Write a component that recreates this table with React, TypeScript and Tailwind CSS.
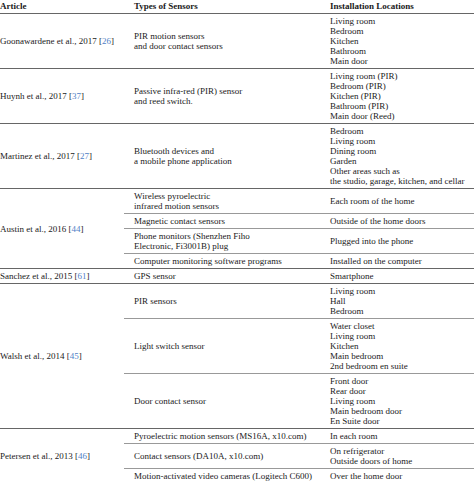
import React from "react";

type Row = { types: string[]; locs: string[] };
type Group = { article: string; ref: string; rows: Row[] };

const groups: Group[] = [
  {
    article: "Goonawardene et al., 2017",
    ref: "26",
    rows: [
      {
        types: ["PIR motion sensors", "and door contact sensors"],
        locs: ["Living room", "Bedroom", "Kitchen", "Bathroom", "Main door"],
      },
    ],
  },
  {
    article: "Huynh et al., 2017",
    ref: "37",
    rows: [
      {
        types: ["Passive infra-red (PIR) sensor", "and reed switch."],
        locs: [
          "Living room (PIR)",
          "Bedroom (PIR)",
          "Kitchen (PIR)",
          "Bathroom (PIR)",
          "Main door (Reed)",
        ],
      },
    ],
  },
  {
    article: "Martinez et al., 2017",
    ref: "27",
    rows: [
      {
        types: ["Bluetooth devices and", "a mobile phone application"],
        locs: [
          "Bedroom",
          "Living room",
          "Dining room",
          "Garden",
          "Other areas such as",
          "the studio, garage, kitchen, and cellar",
        ],
      },
    ],
  },
  {
    article: "Austin et al., 2016",
    ref: "44",
    rows: [
      { types: ["Wireless pyroelectric", "infrared motion sensors"], locs: ["Each room of the home"] },
      { types: ["Magnetic contact sensors"], locs: ["Outside of the home doors"] },
      {
        types: ["Phone monitors (Shenzhen Fiho", "Electronic, Fi3001B) plug"],
        locs: ["Plugged into the phone"],
      },
      { types: ["Computer monitoring software programs"], locs: ["Installed on the computer"] },
    ],
  },
  {
    article: "Sanchez et al., 2015",
    ref: "61",
    rows: [{ types: ["GPS sensor"], locs: ["Smartphone"] }],
  },
  {
    article: "Walsh et al., 2014",
    ref: "45",
    rows: [
      { types: ["PIR sensors"], locs: ["Living room", "Hall", "Bedroom"] },
      {
        types: ["Light switch sensor"],
        locs: ["Water closet", "Living room", "Kitchen", "Main bedroom", "2nd bedroom en suite"],
      },
      {
        types: ["Door contact sensor"],
        locs: ["Front door", "Rear door", "Living room", "Main bedroom door", "En Suite door"],
      },
    ],
  },
  {
    article: "Petersen et al., 2013",
    ref: "46",
    rows: [
      { types: ["Pyroelectric motion sensors (MS16A, x10.com)"], locs: ["In each room"] },
      { types: ["Contact sensors (DA10A, x10.com)"], locs: ["On refrigerator", "Outside doors of home"] },
      { types: ["Motion-activated video cameras (Logitech C600)"], locs: ["Over the home door"] },
    ],
  },
];

const Lines = ({ items }: { items: string[] }) => (
  <>
    {items.map((t, i) => (
      <div key={i} className="h-[10px]">
        {t}
      </div>
    ))}
  </>
);

const App = () => {
  return (
    <div
      className="w-[474px] h-[482px] overflow-hidden bg-white text-[#1a1a1a] text-[9px] leading-[10px] whitespace-nowrap"
      style={{ fontFamily: '"Liberation Serif", "Times New Roman", serif' }}
    >
      <table className="w-[474px] table-fixed border-collapse">
        <colgroup>
          <col className="w-[124px]" />
          <col className="w-[198px]" />
          <col className="w-[152px]" />
        </colgroup>
        <thead>
          <tr>
            <th className="text-left font-bold pt-[1px] pb-[2px] align-top">Article</th>
            <th className="text-left font-bold pl-[10px] pt-[1px] pb-[2px] align-top">Types of Sensors</th>
            <th className="text-left font-bold pl-[8px] pt-[1px] pb-[2px] align-top">Installation Locations</th>
          </tr>
        </thead>
        <tbody>
          {groups.map((g, gi) =>
            g.rows.map((r, ri) => (
              <tr key={`${gi}-${ri}`}>
                {ri === 0 && (
                  <td
                    rowSpan={g.rows.length}
                    className="align-middle border-t border-[#666] py-[2px]"
                  >
                    {g.article} [<span className="text-[#4f81c7]">{g.ref}</span>]
                  </td>
                )}
                <td
                  className={`align-middle pl-[10px] py-[2px] border-t ${
                    ri === 0 ? "border-[#666]" : "border-[#999]"
                  }`}
                >
                  <Lines items={r.types} />
                </td>
                <td
                  className={`align-middle pl-[8px] py-[2px] border-t ${
                    ri === 0 ? "border-[#666]" : "border-[#999]"
                  }`}
                >
                  <Lines items={r.locs} />
                </td>
              </tr>
            ))
          )}
        </tbody>
      </table>
    </div>
  );
};

export default App;
